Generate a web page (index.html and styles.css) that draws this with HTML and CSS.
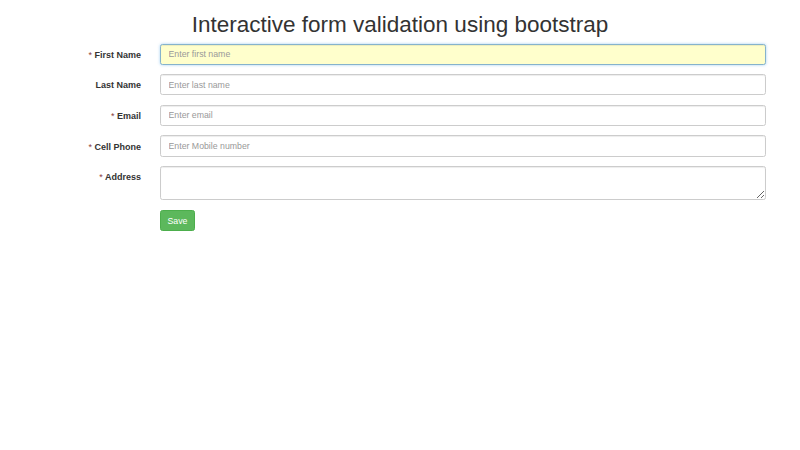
FILE: index.html
```html
<!DOCTYPE html>
<html>
<head>
<meta charset="utf-8">
<link rel="stylesheet" href="styles.css">
</head>
<body>
<h1 class="title">Interactive form validation using bootstrap</h1>
<form class="form">
  <div class="row">
    <label class="label"><span class="req">*</span> First Name</label>
    <input class="control control-focus" type="text" placeholder="Enter first name">
  </div>
  <div class="row">
    <label class="label">Last Name</label>
    <input class="control" type="text" placeholder="Enter last name">
  </div>
  <div class="row">
    <label class="label"><span class="req">*</span> Email</label>
    <input class="control" type="text" placeholder="Enter email">
  </div>
  <div class="row">
    <label class="label"><span class="req">*</span> Cell Phone</label>
    <input class="control" type="text" placeholder="Enter Mobile number">
  </div>
  <div class="row">
    <label class="label"><span class="req">*</span> Address</label>
    <textarea class="control area"></textarea>
  </div>
  <div class="row">
    <span class="label"></span>
    <button class="btn" type="button">Save</button>
  </div>
</form>
</body>
</html>
```
FILE: styles.css
```css
html, body {
  margin: 0;
  padding: 0;
  background: #fff;
  font-family: "Liberation Sans", Arial, sans-serif;
  color: #333;
}
.title {
  margin: 12.5px 0 6.25px;
  font-size: 22.5px;
  font-weight: 500;
  line-height: 1.1;
  text-align: center;
  color: #333;
}
.form {
  display: flex;
  flex-direction: column;
  gap: 9.4px;
  padding-right: 34.5px;
}
.row {
  display: flex;
  align-items: flex-start;
  gap: 19px;
}
.label {
  flex: 0 0 141px;
  text-align: right;
  font-size: 9px;
  font-weight: bold;
  line-height: 12.5px;
  padding-top: 5.2px;
  color: #333;
}
.req {
  color: #8a3b3b;
  font-weight: normal;
}
.control {
  flex: 1;
  box-sizing: border-box;
  height: 21.25px;
  margin: 0;
  padding: 3.75px 7.5px;
  border: 1px solid #ccc;
  border-radius: 2.5px;
  font-family: "Liberation Sans", Arial, sans-serif;
  font-size: 8.75px;
  color: #555;
  background: #fff;
  box-shadow: inset 0 1px 1px rgba(0,0,0,0.075);
  outline: none;
}
.control::placeholder {
  color: #999;
}
.control-focus {
  background: #ffffcc;
  border-color: #86b3cc;
  box-shadow: inset 0 1px 1px rgba(0,0,0,0.075), 0 0 3px rgba(102,175,233,0.6);
}
.area {
  height: 34px;
  resize: vertical;
}
.btn {
  box-sizing: border-box;
  height: 21.25px;
  padding: 3.75px 6.5px;
  margin: 0.5px 0 0;
  border: 1px solid #4cae4c;
  border-radius: 2.5px;
  background: #5cb85c;
  color: #fff;
  font-family: "Liberation Sans", Arial, sans-serif;
  font-size: 8.75px;
  line-height: 1.4;
  cursor: pointer;
}
```
